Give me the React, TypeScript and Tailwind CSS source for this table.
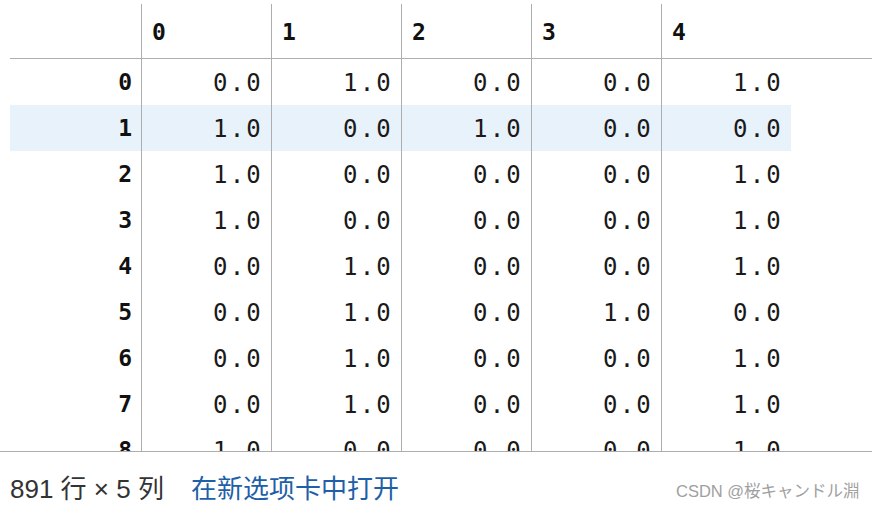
import React from "react";

const data: string[][] = [
  ["0.0", "1.0", "0.0", "0.0", "1.0"],
  ["1.0", "0.0", "1.0", "0.0", "0.0"],
  ["1.0", "0.0", "0.0", "0.0", "1.0"],
  ["1.0", "0.0", "0.0", "0.0", "1.0"],
  ["0.0", "1.0", "0.0", "0.0", "1.0"],
  ["0.0", "1.0", "0.0", "1.0", "0.0"],
  ["0.0", "1.0", "0.0", "0.0", "1.0"],
  ["0.0", "1.0", "0.0", "0.0", "1.0"],
  ["1.0", "0.0", "0.0", "0.0", "1.0"],
];

const mono = { fontFamily: '"DejaVu Sans Mono", "Liberation Mono", monospace' };

export default function App() {
  return (
    <div className="w-[872px] h-[508px] bg-white overflow-hidden relative">
      <div className="h-[452px] overflow-hidden pl-[10px] pt-[4px] border-b border-[#adadad]" style={mono}>
        <div className="flex h-[55px] border-b border-[#adadad]">
          <div className="w-[131px] shrink-0" />
          {[0, 1, 2, 3, 4].map((c) => (
            <div
              key={c}
              className="w-[130px] shrink-0 border-l border-[#adadad] pl-[10px] pt-[3px] flex items-center text-[23px] font-bold text-[#111]"
            >
              {c}
            </div>
          ))}
        </div>
        {data.map((row, r) => (
          <div key={r} className="flex h-[46px]">
            <div
              className={`w-[131px] shrink-0 flex items-center justify-end pr-[9px] pt-[1px] text-[23px] font-bold text-[#111] ${
                r === 1 ? "bg-[#e8f2fb]" : ""
              }`}
            >
              {r}
            </div>
            {row.map((v, c) => (
              <div
                key={c}
                className={`w-[130px] shrink-0 border-l border-[#adadad] flex items-center justify-end pr-[8px] pt-[1px] text-[24px] tracking-[2.2px] text-[#1a1a1a] ${
                  r === 1 ? "bg-[#e8f2fb]" : ""
                }`}
              >
                {v}
              </div>
            ))}
          </div>
        ))}
      </div>
      <div
        className="flex items-center h-[38px] mt-[18px] pl-[10px] text-[26px]"
        style={{ fontFamily: '"Liberation Sans", "Noto Sans CJK SC", sans-serif' }}
      >
        <span className="text-[#333]">891 行 × 5 列</span>
        <span className="ml-[27px] text-[#1f5fa8]">在新选项卡中打开</span>
      </div>
      <div
        className="absolute left-[676px] top-[479px] text-[16.5px] text-[#a0a0a0]"
        style={{ fontFamily: '"Liberation Sans", "Noto Sans CJK JP", sans-serif' }}
      >
        CSDN @桜キャンドル淵
      </div>
    </div>
  );
}
